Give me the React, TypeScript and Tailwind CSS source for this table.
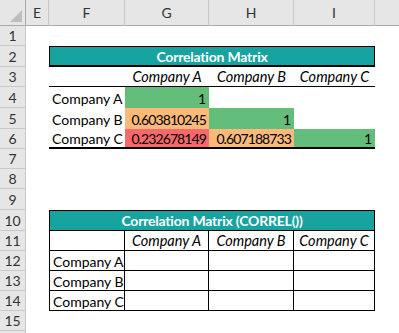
import React from "react";

const COLS = ["w-[23px]", "w-[76px]", "w-[84px]", "w-[85px]", "w-[81px]"];
const ROWH = [
  "h-[20px]", "h-[21px]", "h-[20px]", "h-[21px]", "h-[21px]", "h-[20px]", "h-[20px]", "h-[20px]",
  "h-[21px]", "h-[21px]", "h-[20px]", "h-[20px]", "h-[20px]", "h-[20px]", "h-[20px]", "h-[20px]",
];

const GREEN = "bg-[#63be7b]";
const ORANGE = "bg-[#fbb97a]";
const RED = "bg-[#f8696b]";

type Cell = { text?: string; cls?: string; align?: "l" | "c" | "r"; italic?: boolean; num?: boolean };

function RowHead({ n }: { n: number }) {
  return (
    <div className="w-[26px] shrink-0 bg-[#e6e6e6] border-r border-b border-[#c9c9c9] flex items-center justify-center text-[14px] text-[#333]">
      {n <= 15 ? n : ""}
    </div>
  );
}

function Row({ n, cells }: { n: number; cells: Cell[] }) {
  return (
    <div className={`flex ${ROWH[n - 1]}`}>
      <RowHead n={n} />
      {cells.map((c, i) => (
        <div
          key={i}
          className={`shrink-0 h-full flex items-center px-[3px] pt-px text-black whitespace-nowrap overflow-hidden ${COLS[i]} ${
            c.align === "r" ? "justify-end" : c.align === "c" ? "justify-center" : "justify-start"
          } ${c.italic ? "italic text-[14.5px]" : "text-[14px]"} ${c.num ? "tracking-[-0.9px]" : ""} ${c.cls ?? ""}`}
        >
          {c.text}
        </div>
      ))}
      <div className="flex-1" />
    </div>
  );
}

function TitleRow({ n, title, border }: { n: number; title: string; border: string }) {
  return (
    <div className={`flex ${ROWH[n - 1]}`}>
      <RowHead n={n} />
      <div className="shrink-0 w-[23px]" />
      <div
        className={`shrink-0 w-[326px] h-full bg-[#17a3a0] text-white font-bold text-[14px] tracking-[-0.2px] flex items-center justify-center ${border}`}
      >
        {title}
      </div>
      <div className="flex-1" />
    </div>
  );
}

const empty: Cell = {};
const blank: Cell[] = [empty, empty, empty, empty, empty];
const grid = "border-r border-b border-black";

export default function App() {
  return (
    <div className="w-[399px] h-[333px] bg-white overflow-hidden font-['Lato','Open_Sans',sans-serif]">
      {/* column header */}
      <div className="flex h-[26px]">
        <div className="w-[26px] shrink-0 bg-[#e6e6e6] border-r border-b border-[#aaaaaa] relative">
          <div className="absolute right-[3px] bottom-[3px] w-0 h-0 border-l-[12px] border-l-transparent border-b-[12px] border-b-[#bdbdbd]" />
        </div>
        {["E", "F", "G", "H", "I"].map((l, i) => (
          <div
            key={l}
            className={`shrink-0 bg-[#e6e6e6] border-r border-b border-r-[#c9c9c9] border-b-[#aaaaaa] flex items-center justify-center text-[14px] text-[#333] ${COLS[i]}`}
          >
            {l}
          </div>
        ))}
        <div className="flex-1 bg-[#e6e6e6] border-b border-[#aaaaaa]" />
      </div>

      <Row n={1} cells={blank} />
      <TitleRow n={2} title="Correlation Matrix" border="border border-black border-b-2" />
      <Row
        n={3}
        cells={[
          empty,
          { cls: "border-b border-black" },
          { text: "Company A", align: "c", italic: true, cls: "border-b border-black" },
          { text: "Company B", align: "c", italic: true, cls: "border-b border-black" },
          { text: "Company C", align: "c", italic: true, cls: "border-b border-black" },
        ]}
      />
      <Row n={4} cells={[empty, { text: "Company A" }, { text: "1", align: "r", cls: GREEN }, empty, empty]} />
      <Row
        n={5}
        cells={[
          empty,
          { text: "Company B" },
          { text: "0.603810245", align: "r", num: true, cls: ORANGE },
          { text: "1", align: "r", cls: GREEN },
          empty,
        ]}
      />
      <Row
        n={6}
        cells={[
          empty,
          { text: "Company C", cls: "border-b-2 border-black" },
          { text: "0.232678149", align: "r", num: true, cls: `${RED} border-b-2 border-black` },
          { text: "0.607188733", align: "r", num: true, cls: `${ORANGE} border-b-2 border-black` },
          { text: "1", align: "r", cls: `${GREEN} border-b-2 border-black` },
        ]}
      />
      <Row n={7} cells={blank} />
      <Row n={8} cells={blank} />
      <Row n={9} cells={blank} />
      <TitleRow n={10} title="Correlation Matrix (CORREL())" border="border border-black" />
      <Row
        n={11}
        cells={[
          empty,
          { cls: `border-l ${grid}` },
          { text: "Company A", align: "c", italic: true, cls: grid },
          { text: "Company B", align: "c", italic: true, cls: grid },
          { text: "Company C", align: "c", italic: true, cls: grid },
        ]}
      />
      {["Company A", "Company B", "Company C"].map((t, i) => (
        <Row
          key={t}
          n={12 + i}
          cells={[empty, { text: t, cls: `border-l ${grid}` }, { cls: grid }, { cls: grid }, { cls: grid }]}
        />
      ))}
      <Row n={15} cells={blank} />
      <Row n={16} cells={blank} />
    </div>
  );
}
